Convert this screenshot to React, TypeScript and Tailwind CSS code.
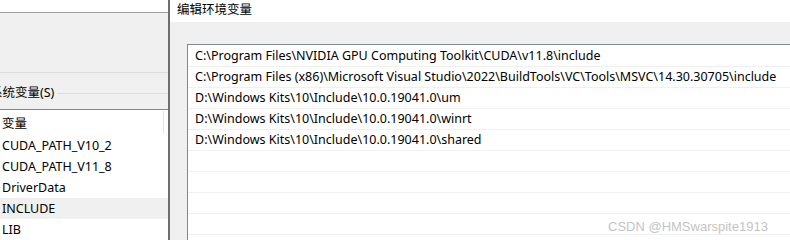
const paths = [
  "C:\\Program Files\\NVIDIA GPU Computing Toolkit\\CUDA\\v11.8\\include",
  "C:\\Program Files (x86)\\Microsoft Visual Studio\\2022\\BuildTools\\VC\\Tools\\MSVC\\14.30.30705\\include",
  "D:\\Windows Kits\\10\\Include\\10.0.19041.0\\um",
  "D:\\Windows Kits\\10\\Include\\10.0.19041.0\\winrt",
  "D:\\Windows Kits\\10\\Include\\10.0.19041.0\\shared",
  "",
  "",
  "",
  "",
];

const vars = ["CUDA_PATH_V10_2", "CUDA_PATH_V11_8", "DriverData", "INCLUDE", "LIB"];

export default function App() {
  return (
    <div className="relative flex h-[240px] w-[790px] overflow-hidden bg-[#f0f0f0] text-[12.5px] text-black font-['Noto_Sans','Noto_Sans_CJK_SC',sans-serif]">
      {/* system variables window, behind */}
      <div className="flex w-[168px] shrink-0 flex-col overflow-hidden">
        <div className="h-[12px] bg-white" />
        <div className="h-px bg-[#a0a0a0]" />
        <div className="h-[60px]" />
        <div className="h-px bg-[#dcdcdc]" />
        <div className="flex h-[37px] items-center pt-[5px]">
          <span className="-ml-[10px] shrink-0 leading-none">系统变量(S)</span>
          <div className="ml-[3px] h-px flex-1 bg-[#dcdcdc]" />
        </div>
        <div className="h-px bg-[#828790]" />
        <div className="flex-1 bg-white">
          <div className="flex h-[25px] items-center">
            <span className="flex-1 pl-[2px] pt-[3px]">变量</span>
            <div className="mr-[4px] h-[23px] w-px bg-[#e5e5e5]" />
          </div>
          {vars.map((v) => (
            <div
              key={v}
              className={`flex h-[21px] items-center pl-[2px] pt-px ${v === "INCLUDE" ? "bg-[#f0f0f0]" : ""}`}
            >
              {v}
            </div>
          ))}
        </div>
      </div>

      <div className="w-[2px] shrink-0 bg-[#6e6e6e]" />

      {/* edit dialog */}
      <div className="flex flex-1 flex-col">
        <div className="flex h-[22px] items-start bg-white pl-[7px] pt-px">编辑环境变量</div>
        <div className="flex-1 pl-[17px] pt-[22px]">
          <div className="h-full border-l border-t border-[#828790] bg-white pt-px">
            {paths.map((p, i) => (
              <div key={i} className="flex h-[21px] items-center whitespace-nowrap border-b border-[#f0f0f0] pl-[7px] pt-px">
                {p}
              </div>
            ))}
          </div>
        </div>
      </div>

      <div className="absolute left-[608px] top-[217px] text-[13px] text-[#c4c4c4] font-['Liberation_Sans',sans-serif]">
        CSDN @HMSwarspite1913
      </div>
    </div>
  );
}
